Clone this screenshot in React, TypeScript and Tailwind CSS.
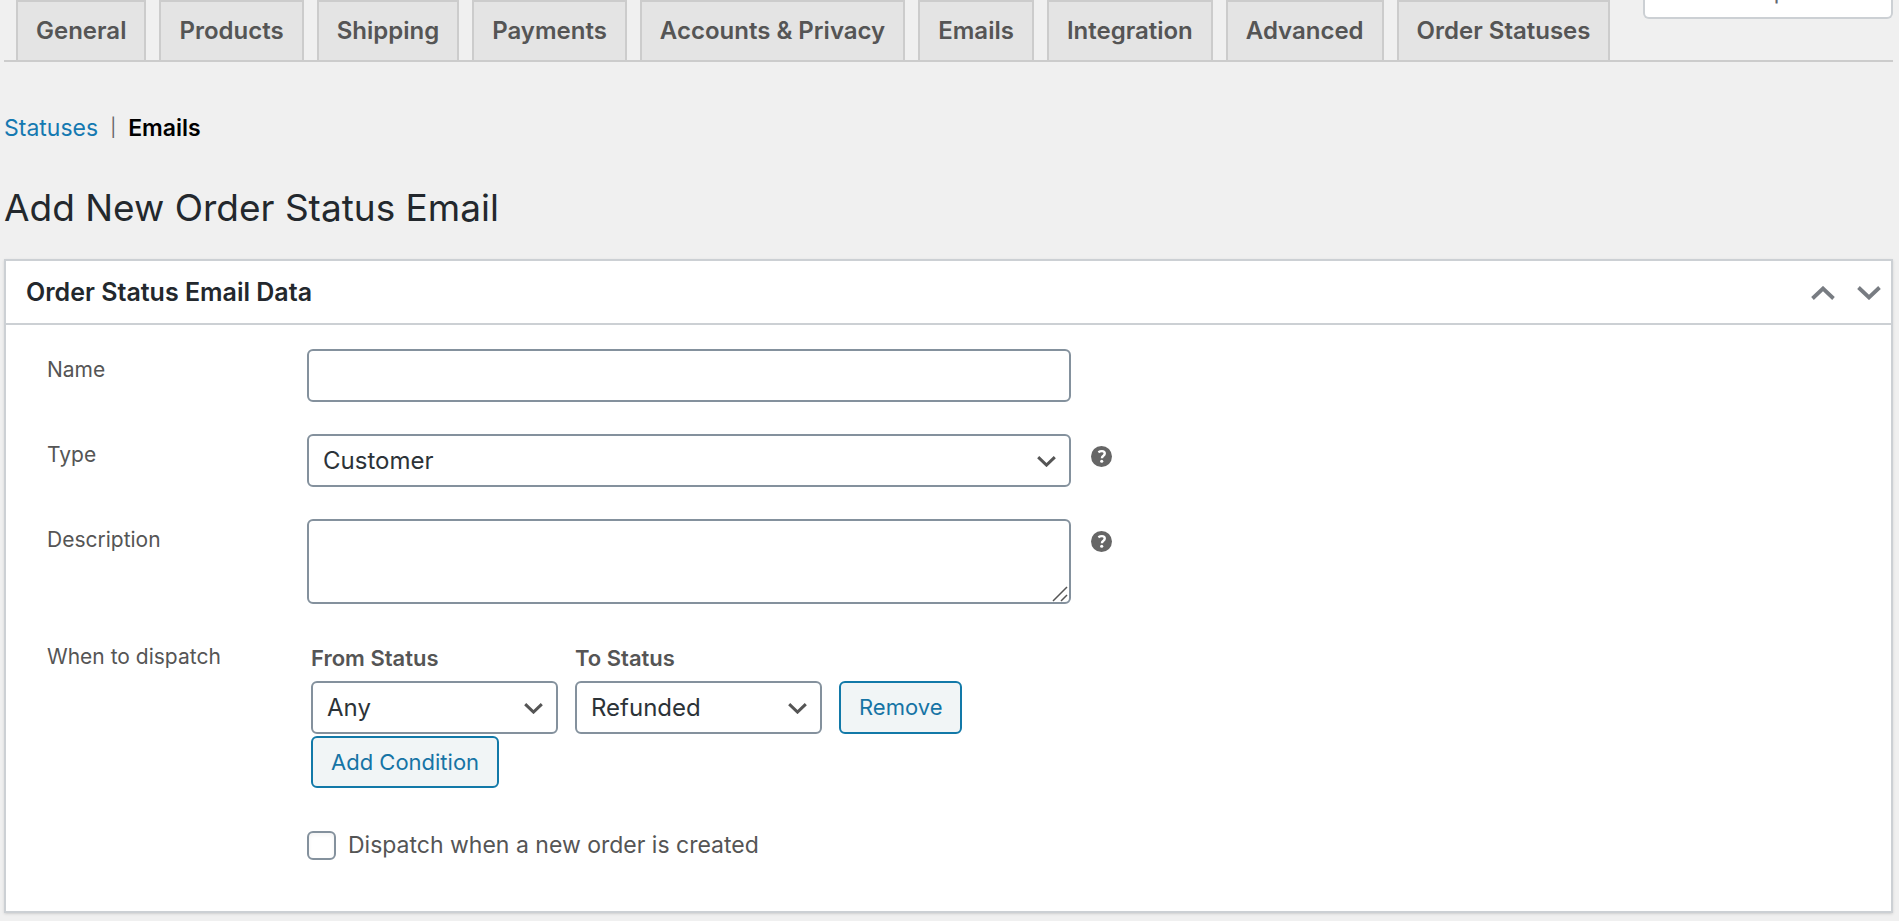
import React, { useState } from 'react';

const TABS = [
  'General',
  'Products',
  'Shipping',
  'Payments',
  'Accounts & Privacy',
  'Emails',
  'Integration',
  'Advanced',
  'Order Statuses',
];

const ChevronIcon = ({ up = false, className = '' }: { up?: boolean; className?: string }) => (
  <svg viewBox="0 0 24 14" fill="none" stroke="currentColor" strokeWidth="3.8" className={className} aria-hidden="true">
    <path d={up ? 'M1.5 12.5L12 2.5L22.5 12.5' : 'M1.5 1.5L12 11.5L22.5 1.5'} />
  </svg>
);

const HelpTip = ({ text }: { text: string }) => (
  <button type="button" aria-label={text} title={text} className="mt-3 ml-5 h-[21px] w-[21px] shrink-0 text-[#666]">
    <svg viewBox="0 0 20 20" className="h-full w-full" aria-hidden="true">
      <circle cx="10" cy="10" r="10" fill="currentColor" />
      <path d="M7 5.9Q8.6 4.9 10.4 4.9Q13.1 4.9 13.1 7.1Q13.1 8.3 11.8 9.2Q10.4 10.1 10.4 11.6" fill="none" stroke="#fff" strokeWidth="2.3" />
      <circle cx="10.2" cy="14.5" r="1.5" fill="#fff" />
    </svg>
  </button>
);

interface SelectBoxProps {
  id: string;
  value: string;
  options: string[];
  onChange: (value: string) => void;
}

const SelectBox = ({ id, value, options, onChange }: SelectBoxProps) => (
  <div className="relative w-full">
    <select
      id={id}
      value={value}
      onChange={(e) => onChange(e.target.value)}
      className="h-[53px] w-full appearance-none rounded-md border-2 border-[#84919d] bg-white pr-12 pl-3.5 text-[24px] text-[#2c3338]"
    >
      {options.map((option) => (
        <option key={option}>{option}</option>
      ))}
    </select>
    <ChevronIcon className="pointer-events-none absolute top-[22px] right-[15px] w-[19px] text-[#555]" />
  </div>
);

const FieldRow = ({ label, htmlFor, children }: { label: string; htmlFor?: string; children: React.ReactNode }) => (
  <div className="flex items-start">
    <label htmlFor={htmlFor} className="w-[260px] shrink-0 pt-[7px] text-[21px] leading-7 text-[#555]">{label}</label>
    {children}
  </div>
);

const App = () => {
  const [name, setName] = useState('');
  const [type, setType] = useState('Customer');
  const [description, setDescription] = useState('');
  const [fromStatus, setFromStatus] = useState('Any');
  const [toStatus, setToStatus] = useState('Refunded');
  const [onCreate, setOnCreate] = useState(false);

  return (
    <div className="min-h-screen overflow-x-hidden bg-[#f0f0f0] pr-1.5 pb-2 pl-1 font-['Inter',sans-serif] text-[#555]">
      <header className="flex h-[62px] items-start justify-between border-b-2 border-[#ccc]">
        <nav className="flex gap-[13px] pl-3">
          {TABS.map((tab) => (
            <a key={tab} href="#" className="h-[60px] border-2 border-b-0 border-[#ccc] bg-[#e4e4e4] px-[18px] pt-[13px] text-[24px] leading-8 font-semibold whitespace-nowrap text-[#555]">
              {tab}
            </a>
          ))}
        </nav>
        <button type="button" className="-mt-8 flex h-[51px] w-[250px] shrink-0 items-center rounded-b-md border-2 border-t-0 border-[#ccd0d4] bg-white pb-1 pl-7 text-[23px] leading-8 whitespace-nowrap text-[#646970]">
          Screen Options
        </button>
      </header>

      <div className="mt-12 flex items-center gap-3 text-[23px] leading-9">
        <a href="#" className="text-[#1579b1]">Statuses</a>
        <span className="text-[18px] text-[#666]">|</span>
        <a href="#" className="font-semibold text-black">Emails</a>
      </div>

      <h1 className="mt-[38px] text-[37px] leading-12 text-[#23282d]">Add New Order Status Email</h1>

      <section className="mt-[27px] border-2 border-[#ccd0d4] bg-white shadow-sm">
        <div className="flex h-16 items-center justify-between border-b-2 border-[#ccd0d4] pt-0.5 pr-2.5 pl-5">
          <h2 className="text-[25px] font-semibold text-[#23282d]">Order Status Email Data</h2>
          <div className="flex gap-[22px] text-[#787c82]">
            <button type="button" aria-label="Move up"><ChevronIcon up className="w-6" /></button>
            <button type="button" aria-label="Move down"><ChevronIcon className="w-6" /></button>
          </div>
        </div>

        <form className="flex flex-col gap-8 pt-6 pb-12 pl-[41px]" onSubmit={(e) => e.preventDefault()}>
          <FieldRow label="Name" htmlFor="email-name">
            <input
              id="email-name"
              type="text"
              value={name}
              onChange={(e) => setName(e.target.value)}
              className="h-[53px] w-[764px] rounded-md border-2 border-[#84919d] bg-white px-3.5 text-[24px] text-[#2c3338]"
            />
          </FieldRow>

          <FieldRow label="Type" htmlFor="email-type">
            <div className="w-[764px]">
              <SelectBox id="email-type" value={type} options={['Customer', 'Admin']} onChange={setType} />
            </div>
            <HelpTip text="Who receives this email" />
          </FieldRow>

          <FieldRow label="Description" htmlFor="email-description">
            <div className="relative h-[85px] w-[764px]">
              <textarea
                id="email-description"
                value={description}
                onChange={(e) => setDescription(e.target.value)}
                className="block h-full w-full resize-none rounded-md border-2 border-[#84919d] bg-white px-3.5 py-1 text-[24px] text-[#2c3338]"
              />
              <svg viewBox="0 0 16 16" fill="none" stroke="#555" strokeWidth="1.5" className="pointer-events-none absolute right-[3px] bottom-0.5 w-4" aria-hidden="true">
                <path d="M1 15L15 1M9 15L15 9" />
              </svg>
            </div>
            <HelpTip text="Optional email description" />
          </FieldRow>

          <FieldRow label="When to dispatch">
            <div className="pt-2">
              <div className="flex items-end gap-[17px] pl-1">
                <div className="w-[247px]">
                  <label htmlFor="from-status" className="block pb-[9px] text-[22px] leading-7 font-semibold">From Status</label>
                  <SelectBox id="from-status" value={fromStatus} options={['Any', 'Pending', 'Processing']} onChange={setFromStatus} />
                </div>
                <div className="w-[247px]">
                  <label htmlFor="to-status" className="block pb-[9px] text-[22px] leading-7 font-semibold">To Status</label>
                  <SelectBox id="to-status" value={toStatus} options={['Refunded', 'Completed', 'Cancelled']} onChange={setToStatus} />
                </div>
                <button type="button" className="h-[53px] rounded-md border-2 border-[#1279a8] bg-[#f1f5f6] px-[18px] text-[22px] text-[#1674a5]">
                  Remove
                </button>
              </div>
              <button type="button" className="mt-0.5 ml-1 h-[52px] rounded-md border-2 border-[#1279a8] bg-[#f1f5f6] px-[18px] text-[22px] text-[#1674a5]">
                Add Condition
              </button>
              <label className="mt-[39px] flex items-center gap-3 text-[23px] leading-9">
                <input
                  type="checkbox"
                  checked={onCreate}
                  onChange={(e) => setOnCreate(e.target.checked)}
                  className="h-[29px] w-[29px] appearance-none rounded-md border-2 border-[#84919d] bg-white shadow-inner checked:bg-[#1674a5]"
                />
                Dispatch when a new order is created
              </label>
            </div>
          </FieldRow>
        </form>
      </section>
    </div>
  );
};

export default App;
